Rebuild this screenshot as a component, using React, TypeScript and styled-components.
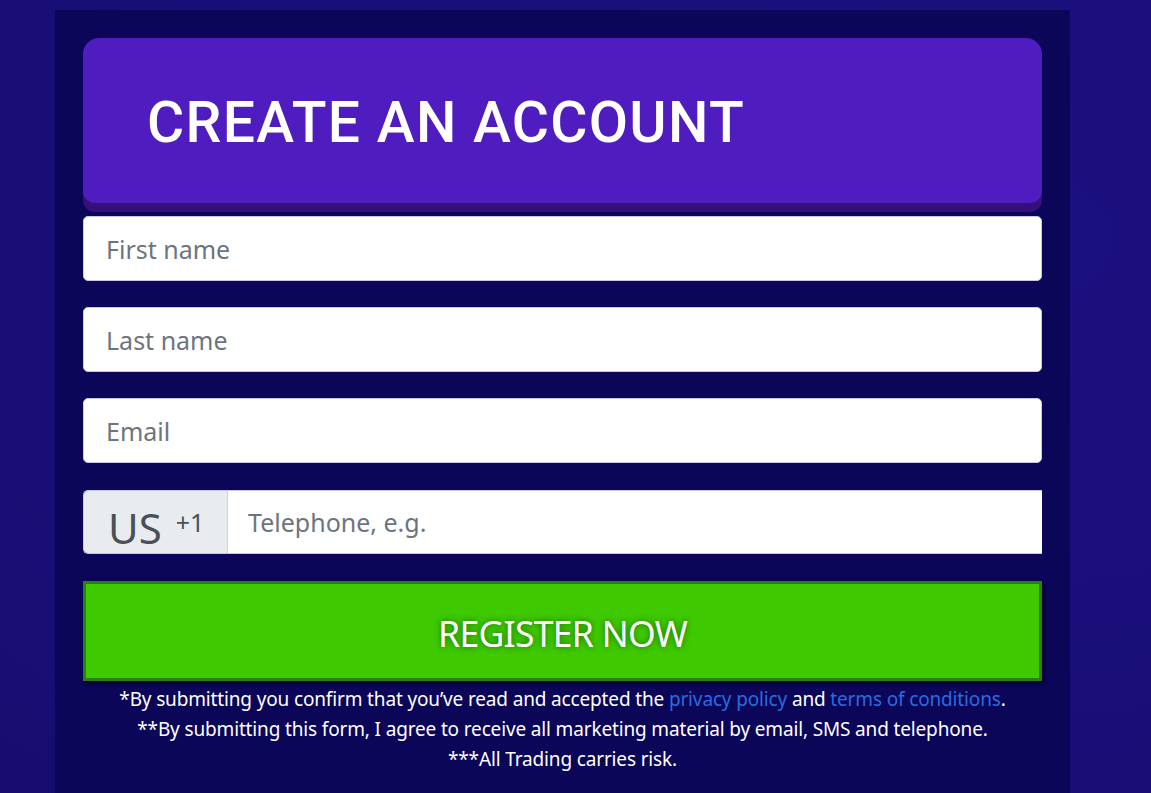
import React from "react";
import styled, { createGlobalStyle } from "styled-components";

const Global = createGlobalStyle`
  html, body { margin: 0; padding: 0; }
  body {
    background: radial-gradient(ellipse at 85% 30%, #1c1080 0%, #1a0f7a 50%, #170d70 100%);
    height: 793px;
    overflow: hidden;
    font-family: "Noto Sans", "Open Sans", sans-serif;
  }
`;

const Page = styled.div`
  display: flex;
  align-items: flex-start;
  padding: 10px 0 0 55px;
`;

const Panel = styled.div`
  box-sizing: border-box;
  width: 1015px;
  height: 783px;
  background: #0b0658;
  padding: 28px 28px 0;
  display: flex;
  flex-direction: column;
  & > * { flex-shrink: 0; }
`;

const Header = styled.div`
  height: 165px;
  box-sizing: border-box;
  background: #4e1cbf;
  border-radius: 16px 16px 12px 12px;
  box-shadow: 0 9px 0 #33107a;
  display: flex;
  align-items: center;
  padding: 4px 0 0 64px;
  margin-bottom: 13px;
`;

const Title = styled.h1`
  margin: 0;
  font-family: Roboto, "Noto Sans", sans-serif;
  font-weight: 500;
  font-size: 57px;
  letter-spacing: 1.3px;
  color: #fff;
`;

const Field = styled.input`
  box-sizing: border-box;
  height: 65px;
  width: 100%;
  border: 1px solid #c9c6ee;
  border-radius: 5px;
  background: #fff;
  padding: 0 22px;
  font-family: "Noto Sans", sans-serif;
  font-size: 25px;
  color: #495057;
  margin-bottom: 26px;
  outline: none;
  &::placeholder { color: #6c757d; }
`;

const PhoneRow = styled.div`
  display: flex;
  box-sizing: border-box;
  height: 64px;
  margin-top: 1px;
  margin-bottom: 27px;
  border-radius: 5px 0 0 5px;
  overflow: hidden;
  border: 1px solid #c9c6ee;
  border-right: none;
`;

const Prefix = styled.div`
  width: 144px;
  background: #e9ecef;
  border-right: 1px solid #ced4da;
  display: flex;
  align-items: flex-start;
  padding-left: 24px;
  box-sizing: border-box;
  color: #495057;
  font-family: "Noto Sans", sans-serif;
`;

const Country = styled.span`
  font-size: 42px;
  line-height: 42px;
  margin-top: 16px;
`;

const Code = styled.span`
  font-size: 25px;
  line-height: 25px;
  margin-left: 14px;
  margin-top: 19px;
`;

const PhoneInput = styled.input`
  flex: 1;
  border: none;
  outline: none;
  padding: 0 20px;
  font-family: "Noto Sans", sans-serif;
  font-size: 25px;
  color: #495057;
  &::placeholder { color: #6c757d; }
`;

const Register = styled.button`
  height: 100px;
  width: 100%;
  background: #3fc900;
  border: 3px solid #2b7f16;
  box-shadow: 2px 2px 4px rgba(0,0,0,0.6);
  color: #fff;
  font-family: "Noto Sans", sans-serif;
  font-size: 35.5px;
  letter-spacing: -0.7px;
  padding-top: 4px;
  text-shadow: 0 0 6px rgba(0, 70, 0, 0.7);
  cursor: pointer;
  margin-bottom: 3px;
`;

const Notes = styled.div`
  text-align: center;
  color: #fff;
  font-family: "Noto Sans", sans-serif;
  font-size: 19px;
  line-height: 30px;
  letter-spacing: -0.15px;
`;

const Link = styled.a`
  color: #2a6be0;
  text-decoration: none;
`;

export default function App() {
  return (
    <>
      <Global />
      <Page>
        <Panel>
          <Header>
            <Title>CREATE AN ACCOUNT</Title>
          </Header>
          <Field placeholder="First name" />
          <Field placeholder="Last name" />
          <Field placeholder="Email" />
          <PhoneRow>
            <Prefix>
              <Country>US</Country>
              <Code>+1</Code>
            </Prefix>
            <PhoneInput placeholder="Telephone, e.g." />
          </PhoneRow>
          <Register>REGISTER NOW</Register>
          <Notes>
            <div>
              *By submitting you confirm that you’ve read and accepted the{" "}
              <Link href="#">privacy policy</Link> and{" "}
              <Link href="#">terms of conditions</Link>.
            </div>
            <div>**By submitting this form, I agree to receive all marketing material by email, SMS and telephone.</div>
            <div>***All Trading carries risk.</div>
          </Notes>
        </Panel>
      </Page>
    </>
  );
}
